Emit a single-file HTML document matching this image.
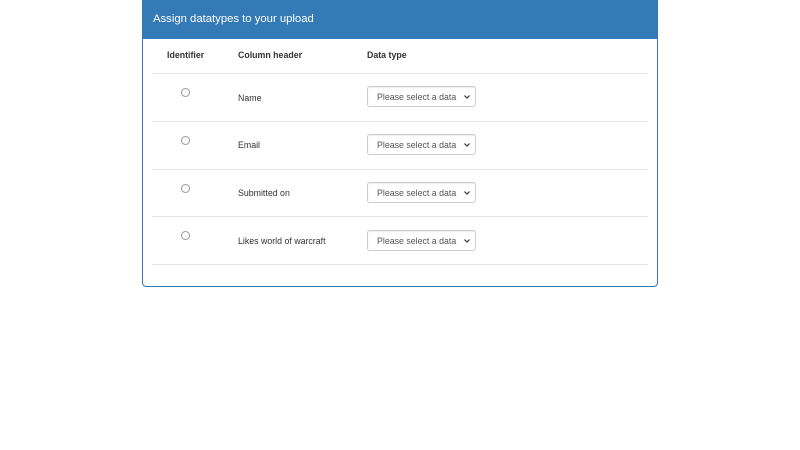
<!DOCTYPE html>
<html><head><style>
body{margin:0;width:800px;height:450px;background:#fff;font-family:"Liberation Sans",sans-serif;font-size:8.8px;color:#333;position:relative}
.panel{position:absolute;left:142px;top:-4px;width:514px;height:289px;border:1px solid #337ab7;border-radius:4px;overflow:hidden}
.head{position:absolute;left:0;top:0;width:100%;height:42px;background:#337ab7;color:#fff;font-size:11.3px}
.head span{position:absolute;left:10px;top:16px}
.t{position:absolute;white-space:nowrap}
.b{font-weight:bold}
.line{position:absolute;left:152px;width:496px;height:1px;background:#e6e6e6}
.radio{position:absolute;left:181px;width:7px;height:7px;border:1px solid #999;border-radius:50%;background:#fff}
.sel{position:absolute;left:367px;width:107px;height:19px;border:1px solid #ccc;border-radius:3px;background:#fff;box-shadow:inset 0 1px 1px rgba(0,0,0,.075);color:#555;font-size:8.8px}
.sel span{position:absolute;left:9px;top:5px}
.sel svg{position:absolute;right:5px;top:8px}
</style></head><body>
<div class="panel"><div class="head"><span>Assign datatypes to your upload</span></div></div>
<div class="t b" style="left:167px;top:50px">Identifier</div>
<div class="t b" style="left:238px;top:50px">Column header</div>
<div class="t b" style="left:367px;top:50px">Data type</div>
<div class="line" style="top:73px"></div>
<div class="line" style="top:121px"></div>
<div class="line" style="top:169px"></div>
<div class="line" style="top:216px"></div>
<div class="line" style="top:264px"></div>

<div class="radio" style="top:88px"></div>
<div class="t" style="left:238px;top:93px">Name</div>
<div class="sel" style="top:86px"><span>Please select a data</span><svg width="6" height="4" viewBox="0 0 6 4"><path d="M0.5 0.5L3 3L5.5 0.5" fill="none" stroke="#333" stroke-width="1.2"/></svg></div>

<div class="radio" style="top:136px"></div>
<div class="t" style="left:238px;top:140px">Email</div>
<div class="sel" style="top:134px"><span>Please select a data</span><svg width="6" height="4" viewBox="0 0 6 4"><path d="M0.5 0.5L3 3L5.5 0.5" fill="none" stroke="#333" stroke-width="1.2"/></svg></div>

<div class="radio" style="top:184px"></div>
<div class="t" style="left:238px;top:188px">Submitted on</div>
<div class="sel" style="top:182px"><span>Please select a data</span><svg width="6" height="4" viewBox="0 0 6 4"><path d="M0.5 0.5L3 3L5.5 0.5" fill="none" stroke="#333" stroke-width="1.2"/></svg></div>

<div class="radio" style="top:231px"></div>
<div class="t" style="left:238px;top:236px">Likes world of warcraft</div>
<div class="sel" style="top:230px"><span>Please select a data</span><svg width="6" height="4" viewBox="0 0 6 4"><path d="M0.5 0.5L3 3L5.5 0.5" fill="none" stroke="#333" stroke-width="1.2"/></svg></div>
</body></html>
